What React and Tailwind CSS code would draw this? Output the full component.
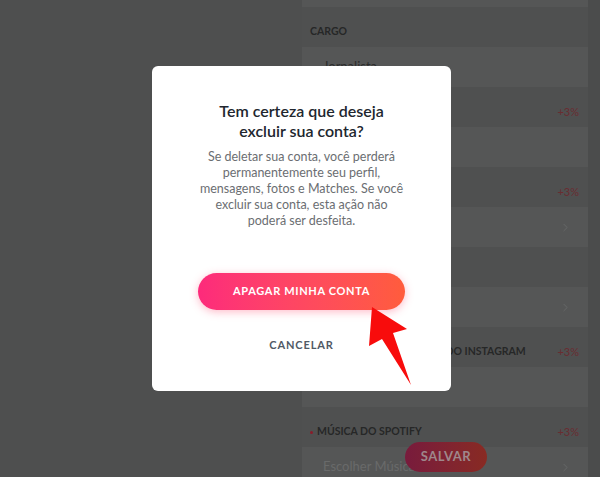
import { ChevronRight } from 'lucide-react';

// labels hidden under the modal are left empty
const rows = [
  { type: 'input', h: 'h-[7px]' },
  { type: 'header', label: 'CARGO' },
  { type: 'input', value: 'Jornalista' },
  { type: 'header', label: '', plus: true },
  { type: 'input', value: '' },
  { type: 'header', label: '', plus: true },
  { type: 'input', value: '', chevron: true },
  { type: 'header', label: '' },
  { type: 'input', value: '', chevron: true },
  { type: 'header', label: 'MOSTRAR MINHAS FOTOS DO INSTAGRAM', plus: true },
  { type: 'input', value: '' },
  { type: 'header', label: 'MÚSICA DO SPOTIFY', plus: true, bullet: true },
  { type: 'input', value: 'Escolher Música', chevron: true, muted: true },
];

function PanelRow({ row }) {
  if (row.type === 'header') {
    return (
      <div className={`${row.h || 'h-[40px]'} shrink-0 bg-[#4f5050] flex items-end justify-between pl-[8px] pr-[9px] pb-[7px]`}>
        <span className="flex items-center gap-[4px] text-[10.5px] font-bold text-[#262727] whitespace-nowrap">
          {row.bullet && <span className="w-[3px] h-[3px] rounded-full bg-[#8a1c2a]" />}
          {row.label}
        </span>
        {row.plus && <span className="text-[11px] text-[#6a2c31]">+3%</span>}
      </div>
    );
  }
  return (
    <div className={`${row.h || 'h-[40px]'} shrink-0 bg-[#555656] flex items-center justify-between pl-[21px] pr-[16px]`}>
      <span className={`text-[13px] ${row.muted ? 'text-[#696a6a]' : 'text-[#2c2d2d]'}`}>{row.value}</span>
      {row.chevron && <ChevronRight size={13} strokeWidth={1.5} className="text-[#6a6b6b]" />}
    </div>
  );
}

export default function App() {
  return (
    <div className="relative w-[600px] h-[477px] overflow-hidden flex bg-[#4e4f4f] font-['Lato',sans-serif]">
      <div className="w-[302px] shrink-0" />
      <div className="w-[286px] shrink-0 flex flex-col">
        {rows.map((row, i) => (
          <PanelRow key={i} row={row} />
        ))}
      </div>
      <div className="flex-1 bg-[#4b4c4c]" />

      {/* floating save button (behind overlay) */}
      <div className="absolute left-[405px] top-[442px] w-[82px] h-[30px] rounded-full bg-gradient-to-r from-[#781b3c] to-[#882a22] flex items-center justify-center">
        <span className="text-[13px] font-bold tracking-[0.04em] text-[#9f878b]">SALVAR</span>
      </div>

      {/* modal */}
      <div className="absolute left-[152px] top-[66px] w-[299px] h-[325px] bg-white rounded-[6px] flex flex-col items-center pt-[35px]">
        <h2 className="text-[16px] leading-[20px] font-semibold text-[#21262e] text-center">
          Tem certeza que deseja
          <br />
          excluir sua conta?
        </h2>
        <p className="mt-[8px] text-[12.5px] leading-[16px] text-[#6b6e72] text-center">
          Se deletar sua conta, você perderá
          <br />
          permanentemente seu perfil,
          <br />
          mensagens, fotos e Matches. Se você
          <br />
          excluir sua conta, esta ação não
          <br />
          poderá ser desfeita.
        </p>
        <button className="mt-[44px] w-[207px] h-[37px] rounded-full bg-gradient-to-r from-[#fd2a7b] to-[#ff5c3c] shadow-[0_2px_8px_rgba(253,60,100,0.35)] text-white text-[11px] font-bold tracking-[0.06em]">
          APAGAR MINHA CONTA
        </button>
        <button className="mt-[27px] text-[11px] font-bold tracking-[0.08em] text-[#505965]">
          CANCELAR
        </button>
      </div>

      {/* annotation arrow */}
      <svg className="absolute left-0 top-0" width="600" height="477" viewBox="0 0 600 477">
        <polygon
          points="372,307 407,329 393,333 411,385 382,339 369,346"
          fill="#f80c0c"
        />
      </svg>
    </div>
  );
}
